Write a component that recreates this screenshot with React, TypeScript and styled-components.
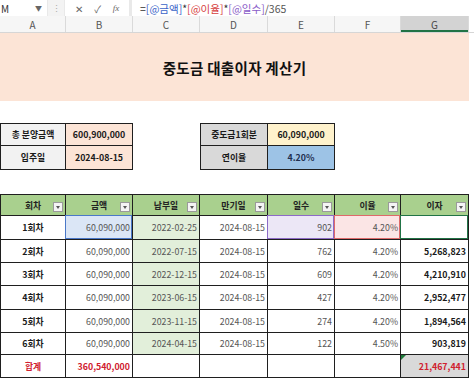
import styled, { createGlobalStyle, css } from 'styled-components';

const GlobalStyle = createGlobalStyle`
  html, body {
    margin: 0;
    padding: 0;
    background: #ffffff;
    overflow: hidden;
  }
  body {
    font-family: 'Noto Sans CJK KR', 'Noto Sans', sans-serif;
  }
`;

const COLS = '66px 67px 67px 68px 67px 66px 68px';

const Page = styled.div`
  width: 474px;
  height: 382px;
  background: #ffffff;
  display: flex;
  flex-direction: column;
`;

const FormulaBar = styled.div`
  height: 16px;
  display: flex;
  align-items: stretch;
  background: #e9e9e9;
  gap: 1px;
  font-size: 10px;
  color: #444;
`;

const NameBox = styled.div`
  width: 47px;
  background: #ffffff;
  display: flex;
  align-items: center;
  justify-content: space-between;
  padding: 0 5px 0 1px;
  box-sizing: border-box;
  font-size: 10px;
  color: #333;
`;

const Caret = styled.span`
  font-size: 7px;
  color: #666;
`;

const Grip = styled.div`
  width: 16px;
  display: flex;
  align-items: center;
  justify-content: center;
  color: #aaa;
  font-size: 9px;
  background: #f3f3f3;
`;

const FxBox = styled.div`
  width: 64px;
  background: #ffffff;
  display: flex;
  align-items: center;
  justify-content: space-around;
  padding: 0 4px;
  box-sizing: border-box;
  color: #666;
  font-size: 10px;
`;

const Fx = styled.span`
  font-family: 'Liberation Serif', serif;
  font-style: italic;
  font-size: 9px;
`;

const Formula = styled.div`
  flex: 1;
  background: #ffffff;
  margin-left: 2px;
  display: flex;
  align-items: center;
  padding-left: 8px;
  font-size: 10.5px;
  white-space: nowrap;
`;

const Ref = styled.span<{ $c: string }>`
  color: ${(p) => p.$c};
`;

const HeaderRow = styled.div`
  display: grid;
  grid-template-columns: ${COLS};
  height: 17px;
  background: #ffffff;
  border-bottom: 1px solid #d6d6d6;
  box-sizing: border-box;
`;

const ColHead = styled.div<{ $active?: boolean }>`
  display: flex;
  align-items: center;
  justify-content: center;
  font-size: 10px;
  color: #555;
  border-right: 1px solid #dadada;
  background: #f6f6f6;
  ${(p) =>
    p.$active &&
    css`
      background: #d3d3d3;
      color: #444;
      box-shadow: inset 0 -2px 0 #217346;
    `}
`;

const Sheet = styled.div`
  display: grid;
  grid-template-columns: ${COLS};
  grid-template-rows: 68px 22px 23px 24px 24px 22px 24px 23px 23px 24px 23px 22px 23px;
  font-size: 8.8px;
`;

const Title = styled.div`
  grid-column: 1 / span 7;
  background: #fce4d6;
  display: flex;
  align-items: center;
  justify-content: center;
  font-size: 14.5px;
  font-weight: 700;
  color: #111;
  letter-spacing: 0.3px;
`;

const Blank = styled.div<{ $span?: number }>`
  grid-column: span ${(p) => p.$span ?? 1};
`;

const Cell = styled.div<{
  $bg?: string;
  $align?: 'left' | 'center' | 'right';
  $bold?: boolean;
  $color?: string;
  $top?: boolean;
  $left?: boolean;
}>`
  position: relative;
  box-sizing: border-box;
  display: flex;
  align-items: center;
  justify-content: ${(p) =>
    p.$align === 'right' ? 'flex-end' : p.$align === 'left' ? 'flex-start' : 'center'};
  padding: 0 2px;
  background: ${(p) => p.$bg ?? '#ffffff'};
  color: ${(p) => p.$color ?? (p.$bold ? '#1a1a1a' : '#555')};
  font-weight: ${(p) => (p.$bold ? 700 : 400)};
  border-right: 1px solid #1f1f1f;
  border-bottom: 1px solid #1f1f1f;
  ${(p) => p.$top && 'border-top: 1px solid #1f1f1f;'}
  ${(p) => p.$left && 'border-left: 1px solid #1f1f1f;'}
  white-space: nowrap;
`;

const HeadCell = styled(Cell)`
  background: #a9d08e;
  align-items: flex-start;
  padding-top: 4px;
  color: #222;
`;

const Filter = styled.span`
  position: absolute;
  right: 2px;
  bottom: 3px;
  width: 8px;
  height: 8px;
  border: 1px solid #9a9a9a;
  background: #f4f4f4;
  display: flex;
  align-items: center;
  justify-content: center;
  &::after {
    content: '';
    border-left: 2.5px solid transparent;
    border-right: 2.5px solid transparent;
    border-top: 3px solid #555;
    margin-top: 1px;
  }
`;

const Mark = styled.div<{ $ring: string; $fill: string }>`
  position: absolute;
  inset: -1px 0 0 -1px;
  border: 1.5px solid ${(p) => p.$ring};
  background: ${(p) => p.$fill};
  z-index: 0;
  pointer-events: none;
`;

const Txt = styled.span`
  position: relative;
  z-index: 1;
`;

const Tri = styled.span`
  position: absolute;
  left: 0;
  top: 0;
  width: 0;
  height: 0;
  border-top: 5px solid #1e7a3a;
  border-right: 5px solid transparent;
`;

const HEADS = ['회차', '금액', '납부일', '만기일', '일수', '이율', '이자'];

const ROWS = [
  ['1회차', '60,090,000', '2022-02-25', '2024-08-15', '902', '4.20%', ''],
  ['2회차', '60,090,000', '2022-07-15', '2024-08-15', '762', '4.20%', '5,268,823'],
  ['3회차', '60,090,000', '2022-12-15', '2024-08-15', '609', '4.20%', '4,210,910'],
  ['4회차', '60,090,000', '2023-06-15', '2024-08-15', '427', '4.20%', '2,952,477'],
  ['5회차', '60,090,000', '2023-11-15', '2024-08-15', '274', '4.20%', '1,894,564'],
  ['6회차', '60,090,000', '2024-04-15', '2024-08-15', '122', '4.50%', '903,819'],
];

const MARKS: Record<number, { ring: string; fill: string }> = {
  1: { ring: '#4a78c8', fill: '#dbe6f6' },
  4: { ring: '#8c6bc6', fill: '#ece7f6' },
  5: { ring: '#de6a6a', fill: '#fbe5e5' },
  6: { ring: '#217346', fill: '#ffffff' },
};

const RED = '#d0202e';

export default function App() {
  return (
    <Page>
      <GlobalStyle />
      <FormulaBar>
        <NameBox>
          <span>M</span>
          <Caret>▼</Caret>
        </NameBox>
        <Grip>⋮</Grip>
        <FxBox>
          <span>✕</span>
          <span>✓</span>
          <Fx>fx</Fx>
        </FxBox>
        <Formula>
          <Ref $c="#333">=</Ref>
          <Ref $c="#3b64c8">[@금액]</Ref>
          <Ref $c="#333">*</Ref>
          <Ref $c="#d63c3c">[@이율]</Ref>
          <Ref $c="#333">*</Ref>
          <Ref $c="#8a5cc8">[@일수]</Ref>
          <Ref $c="#555">/365</Ref>
        </Formula>
      </FormulaBar>

      <HeaderRow>
        {['A', 'B', 'C', 'D', 'E', 'F', 'G'].map((c) => (
          <ColHead key={c} $active={c === 'G'}>
            {c}
          </ColHead>
        ))}
      </HeaderRow>

      <Sheet>
        <Title>중도금 대출이자 계산기</Title>
        <Blank $span={7} />

        <Cell $top $left $bold $bg="#f2f2f2">총 분양금액</Cell>
        <Cell $top $bold $bg="#fce4d6">600,900,000</Cell>
        <Blank />
        <Cell $top $left $bold $bg="#d9d9d9">중도금1회분</Cell>
        <Cell $top $bold $bg="#fff2cc">60,090,000</Cell>
        <Blank $span={2} />

        <Cell $left $bold $bg="#f2f2f2">입주일</Cell>
        <Cell $bold $bg="#fce4d6">2024-08-15</Cell>
        <Blank />
        <Cell $left $bold $bg="#d9d9d9">연이율</Cell>
        <Cell $bold $bg="#9dc3e6" $color="#1f2f4f">4.20%</Cell>
        <Blank $span={2} />

        <Blank $span={7} />

        {HEADS.map((h, i) => (
          <HeadCell key={h} $top $left={i === 0} $bold>
            {h}
            <Filter />
          </HeadCell>
        ))}

        {ROWS.map((r, ri) =>
          r.map((v, ci) => {
            const mark = ri === 0 ? MARKS[ci] : undefined;
            return (
              <Cell
                key={`${ri}-${ci}`}
                $left={ci === 0}
                $align={ci === 0 ? 'center' : 'right'}
                $bold={ci === 0 || ci === 6}
                $bg={ci === 2 ? '#e2efda' : '#ffffff'}
              >
                {mark && <Mark $ring={mark.ring} $fill={mark.fill} />}
                <Txt>{v}</Txt>
              </Cell>
            );
          }),
        )}

        <Cell $left $bold $color={RED}>합계</Cell>
        <Cell $bold $align="right" $color={RED}>360,540,000</Cell>
        <Cell />
        <Cell />
        <Cell />
        <Cell />
        <Cell $bold $align="right" $color={RED} $bg="#d9d9d9">
          <Tri />
          21,467,441
        </Cell>
      </Sheet>
    </Page>
  );
}
